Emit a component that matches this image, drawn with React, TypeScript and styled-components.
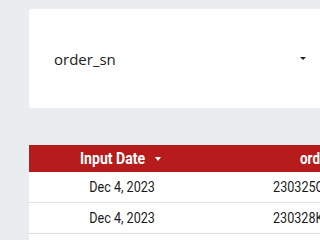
import React from "react";
import styled, { createGlobalStyle } from "styled-components";

const Global = createGlobalStyle`
  html, body { margin: 0; padding: 0; background: #eaedf0; overflow: hidden; }
  #root { width: 320px; height: 240px; overflow: hidden; }
`;

const Page = styled.div`
  display: flex;
  flex-direction: column;
  gap: 37px;
  padding: 9px 0 0 29px;
  width: 600px;
`;

const Card = styled.div`
  background: #fff;
  border-radius: 3px;
  height: 99px;
  width: 560px;
  display: flex;
  align-items: center;
  padding-left: 25px;
  box-sizing: border-box;
`;

const Select = styled.div`
  width: 253px;
  display: flex;
  align-items: center;
  justify-content: space-between;
  font-family: "Open Sans", sans-serif;
  font-size: 15px;
  color: #222;
`;

const Caret = styled.span`
  width: 0;
  height: 0;
  border-left: 3px solid transparent;
  border-right: 3px solid transparent;
  border-top: 3px solid #222;
  margin-right: 1px;
`;

const Table = styled.div`
  display: grid;
  grid-template-columns: 186px 222px;
  font-family: Roboto, sans-serif;
`;

const Condensed = styled.span<{ $scale?: number; $origin?: string }>`
  display: inline-block;
  transform: scaleX(${(p) => p.$scale ?? 0.84});
  transform-origin: ${(p) => p.$origin ?? "center"};
  white-space: nowrap;
`;

const HeadCell = styled.div<{ $padRight?: number }>`
  background: #b71c1c;
  color: #fff;
  font-weight: 700;
  font-size: 16px;
  height: 27px;
  display: flex;
  align-items: center;
  justify-content: center;
  padding-right: ${(p) => p.$padRight ?? 0}px;
`;

const HeadCaret = styled.span`
  width: 0;
  height: 0;
  border-left: 3px solid transparent;
  border-right: 3px solid transparent;
  border-top: 4px solid #fff;
  margin-left: 1px;
`;

const Cell = styled.div`
  background: #fff;
  color: #1a1a1a;
  font-size: 15px;
  height: 31px;
  border-bottom: 1px solid #e0e0e0;
  box-sizing: border-box;
  display: flex;
  align-items: center;
  justify-content: center;
`;

const rows = [
  { date: "Dec 4, 2023", sn: "230325C8KJ6M2P" },
  { date: "Dec 4, 2023", sn: "230328KJ5W1RTA" },
  { date: "Dec 4, 2023", sn: "230329BX7H2QNE" },
];

export default function App() {
  return (
    <>
      <Global />
      <Page>
        <Card>
          <Select>
            <span>order_sn</span>
            <Caret />
          </Select>
        </Card>
        <Table>
          <HeadCell $padRight={3}>
            <Condensed $scale={0.88} $origin="left">
              Input Date
            </Condensed>
            <HeadCaret />
          </HeadCell>
          <HeadCell>
            <Condensed>order_sn</Condensed>
          </HeadCell>
          {rows.map((r, i) => (
            <React.Fragment key={i}>
              <Cell>
                <Condensed>{r.date}</Condensed>
              </Cell>
              <Cell>
                <Condensed>{r.sn}</Condensed>
              </Cell>
            </React.Fragment>
          ))}
        </Table>
      </Page>
    </>
  );
}
